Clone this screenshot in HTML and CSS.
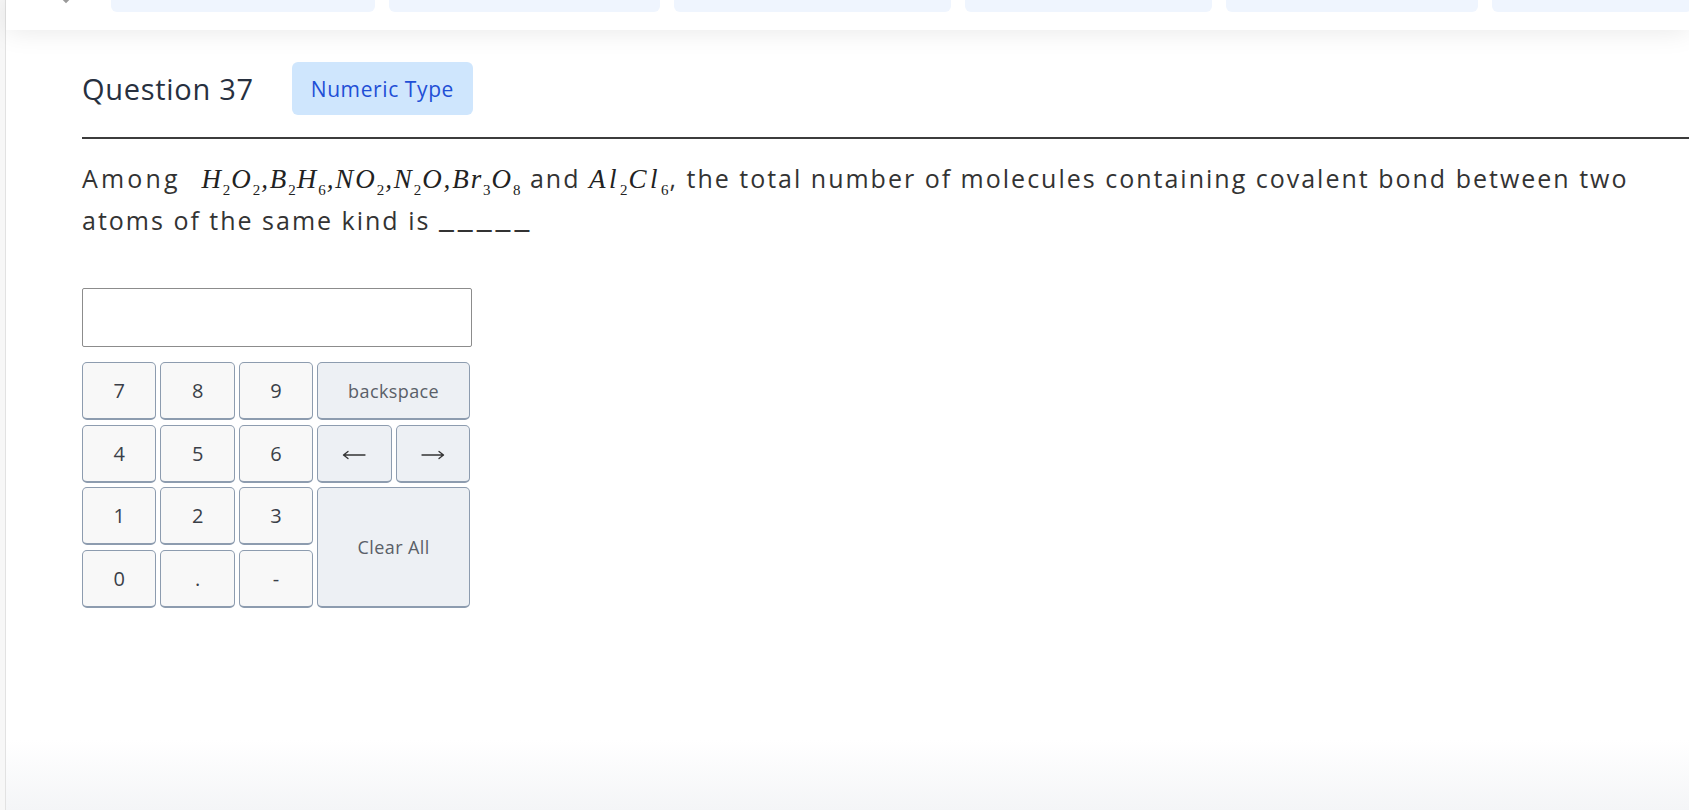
FILE: index.html
```html
<!DOCTYPE html>
<html lang="en">
<head>
<meta charset="utf-8">
<title>Question 37</title>
<link rel="stylesheet" href="styles.css">
</head>
<body>
<div class="page">
  <header class="topbar">
    <span class="caret"></span>
    <div class="tabs">
      <div class="tab tab-1"></div>
      <div class="tab tab-2"></div>
      <div class="tab tab-3"></div>
      <div class="tab tab-4"></div>
      <div class="tab tab-5"></div>
      <div class="tab tab-6"></div>
    </div>
  </header>
  <main class="content">
    <div class="q-head">
      <h1 class="q-title">Question 37</h1>
      <span class="badge">Numeric Type</span>
    </div>
    <hr class="divider">
    <p class="q-text"><span class="lead">Among</span> <span class="math math-first">H<sub>2</sub>O<sub>2</sub>,B<sub>2</sub>H<sub>6</sub>,NO<sub>2</sub>,N<sub>2</sub>O,Br<sub>3</sub>O<sub>8</sub></span> and <span class="math math-wide">Al<sub>2</sub>Cl<sub>6</sub></span>, the total number of molecules containing covalent bond between two atoms of the same kind is <span class="blank">_____</span></p>
    <div class="answer">
      <input class="answer-input" type="text" aria-label="answer">
      <div class="keypad">
        <button class="key">7</button>
        <button class="key">8</button>
        <button class="key">9</button>
        <button class="key key-fn key-wide">backspace</button>
        <button class="key">4</button>
        <button class="key">5</button>
        <button class="key">6</button>
        <button class="key key-fn" aria-label="left"><svg class="arrow" width="24" height="10" viewBox="0 0 24 10"><path d="M1.5 5H23M1.5 5L6 1.5M1.5 5L6 8.5" fill="none" stroke="#333" stroke-width="1.3" stroke-linecap="round"/></svg></button>
        <button class="key key-fn" aria-label="right"><svg class="arrow" width="24" height="10" viewBox="0 0 24 10"><path d="M22.5 5H1M22.5 5L18 1.5M22.5 5L18 8.5" fill="none" stroke="#333" stroke-width="1.3" stroke-linecap="round"/></svg></button>
        <button class="key">1</button>
        <button class="key">2</button>
        <button class="key">3</button>
        <button class="key key-fn key-clear">Clear All</button>
        <button class="key">0</button>
        <button class="key">.</button>
        <button class="key">-</button>
      </div>
    </div>
  </main>
</div>
</body>
</html>
```
FILE: styles.css
```css
* { box-sizing: border-box; }

html, body {
  margin: 0;
  padding: 0;
  height: 100%;
  background: #f7f7f7;
  overflow: hidden;
}

body {
  font-family: "Open Sans", "Noto Sans", sans-serif;
  color: #333;
}

.page {
  margin-left: 5px;
  border-left: 1px solid #e2e2e2;
  height: 810px;
  display: flex;
  flex-direction: column;
  background: #fff;
}

.topbar {
  position: relative;
  z-index: 2;
  height: 30px;
  background: #fff;
  box-shadow: 0 0 28px rgba(0, 0, 0, 0.1);
  display: flex;
  align-items: flex-start;
}

.caret {
  position: absolute;
  left: 57px;
  top: -4px;
  width: 6px;
  height: 6px;
  background: #999;
  transform: rotate(45deg);
}

.tabs {
  display: flex;
  gap: 14px;
  padding-left: 105px;
  height: 12px;
}

.tab {
  height: 12px;
  background: #eff5fe;
  border-radius: 0 0 6px 6px;
  flex: none;
}
.tab-1 { width: 264px; }
.tab-2 { width: 271px; }
.tab-3 { width: 277px; }
.tab-4 { width: 247px; }
.tab-5 { width: 252px; }
.tab-6 { width: 200px; }

.content {
  flex: 1;
  padding: 32px 0 0 76px;
  background: linear-gradient(to bottom, #fff calc(100% - 70px), #f4f5f7 100%);
}

.q-head {
  display: flex;
  align-items: center;
  gap: 38px;
  height: 53px;
}

.q-title {
  margin: 0;
  font-weight: 400;
  font-size: 29px;
  color: #27303f;
  letter-spacing: 0.7px;
}

.badge {
  display: inline-flex;
  align-items: center;
  height: 53px;
  padding: 0 19px;
  background: #cfe6fd;
  color: #1f4fd6;
  font-size: 21px;
  letter-spacing: 0.6px;
  border-radius: 6px;
}

.divider {
  margin: 22px 0 0 0;
  border: 0;
  height: 2px;
  background: #3c3c3c;
}

.q-text {
  margin: 18px 0 0 0;
  font-size: 25px;
  line-height: 42px;
  letter-spacing: 2px;
  color: #333;
  max-width: 1570px;
}

.lead {
  letter-spacing: 3.2px;
}

.math {
  font-family: "Liberation Serif", "Times New Roman", serif;
  font-style: italic;
  font-size: 27px;
  line-height: 1;
  letter-spacing: 1.9px;
  color: #222;
}

.math-first {
  margin-left: 12px;
}

.math-wide {
  letter-spacing: 3.5px;
}

.math sub {
  font-style: normal;
  font-size: 15px;
  vertical-align: -7px;
  line-height: 0;
  letter-spacing: 1px;
}

.blank {
  font-size: 34px;
  line-height: 0;
  letter-spacing: 4px;
  vertical-align: 3px;
}

.answer {
  margin-top: 47px;
  width: 390px;
}

.answer-input {
  display: block;
  width: 390px;
  height: 59px;
  border: 1.5px solid #8c8c8c;
  border-radius: 2px;
  background: #fff;
  outline: none;
}

.keypad {
  margin-top: 15px;
  width: 388px;
  display: grid;
  grid-template-columns: repeat(5, 1fr);
  grid-auto-rows: 58px;
  gap: 4.5px 4px;
}

.key {
  font-family: "Open Sans", "Noto Sans", sans-serif;
  font-size: 20px;
  color: #3a3f48;
  background: #f8f8f8;
  border: 1.5px solid #8d9caf;
  border-bottom-width: 2px;
  border-radius: 5px;
  padding: 0;
  display: flex;
  align-items: center;
  justify-content: center;
}

.key-fn {
  background: #edf0f4;
  color: #4a4f58;
}

.arrow {
  display: block;
  margin-top: 3px;
}

.key-wide {
  grid-column: span 2;
  font-size: 18px;
  letter-spacing: 0.4px;
  color: #5a5f68;
}

.key-clear {
  grid-column: span 2;
  grid-row: span 2;
  font-size: 18px;
  letter-spacing: 0.4px;
  color: #5a5f68;
}
```
